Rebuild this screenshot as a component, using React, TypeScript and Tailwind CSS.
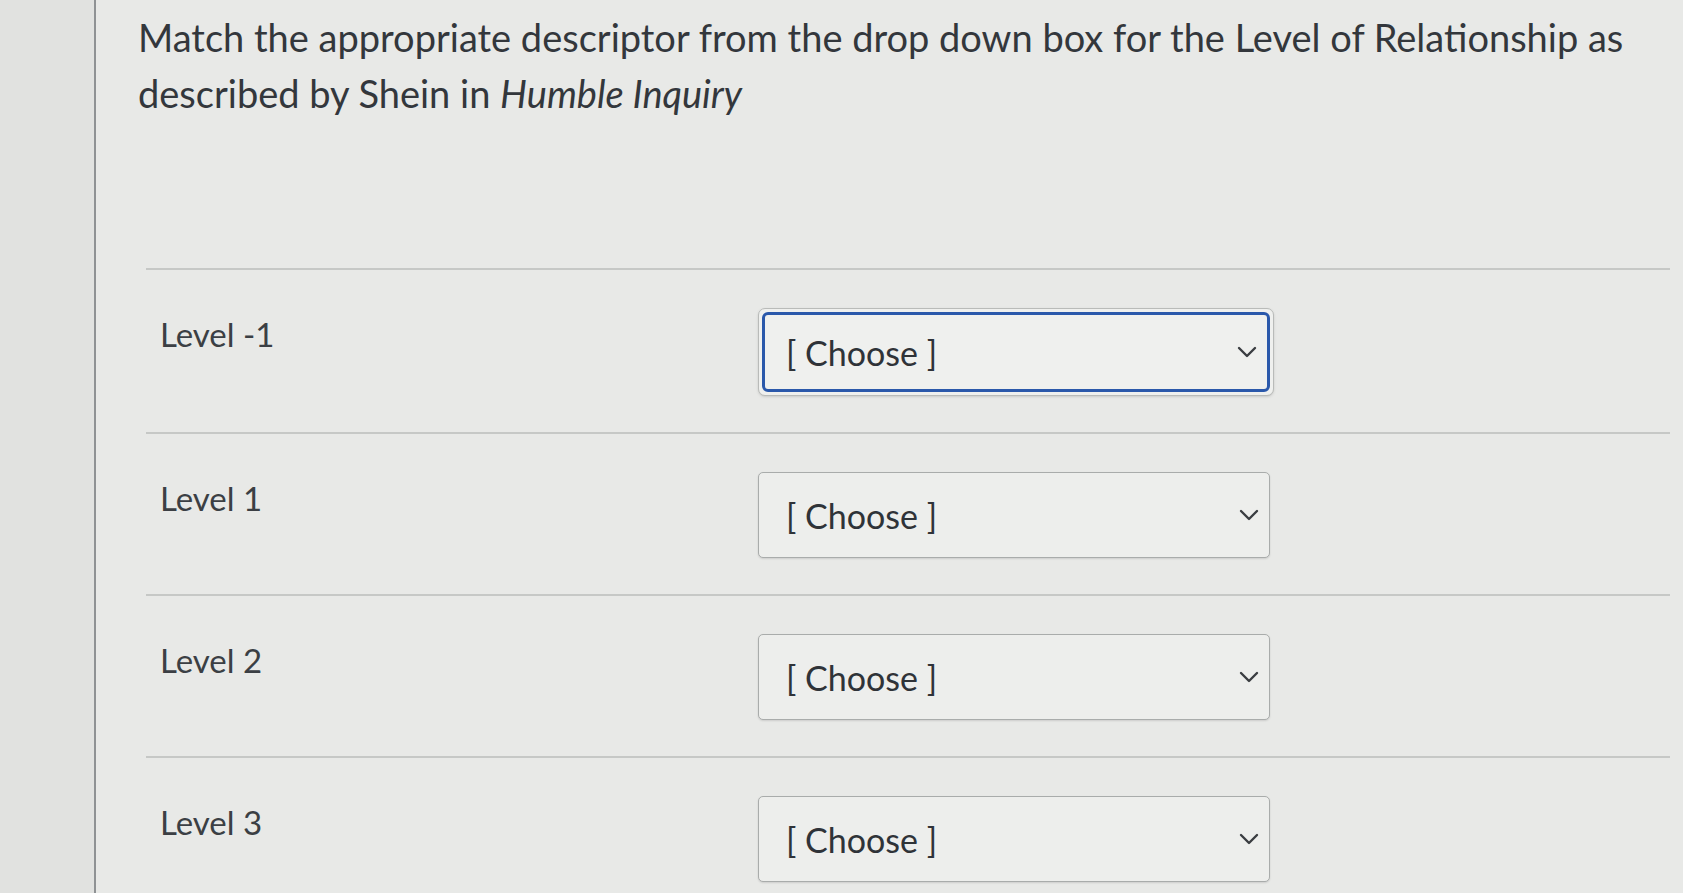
import { useState } from "react";

const levels = ["Level -1", "Level 1", "Level 2", "Level 3"];

function Chevron() {
  return (
    <svg
      width="20"
      height="12"
      viewBox="0 0 20 12"
      fill="none"
      className="pointer-events-none absolute right-[10px] top-1/2 -translate-y-1/2"
    >
      <path
        d="M2 2 L10 10 L18 2"
        stroke="#3a3d41"
        strokeWidth="2.4"
        strokeLinecap="round"
        strokeLinejoin="round"
      />
    </svg>
  );
}

function ChooseSelect({ focused }: { focused: boolean }) {
  const [value, setValue] = useState("");

  const select = (
    <select
      value={value}
      onChange={(e) => setValue(e.target.value)}
      className={`h-full w-full appearance-none bg-transparent pr-10 text-[34px] text-[#2f3338] outline-none ${
        focused ? "pl-[21px]" : "pl-[27px]"
      }`}
    >
      <option value="">[ Choose ]</option>
      <option value="a">Transactional</option>
      <option value="b">Personal</option>
      <option value="c">Intimate</option>
      <option value="d">Exploitative</option>
    </select>
  );

  if (focused) {
    return (
      <div className="h-[88px] w-[516px] rounded-[7px] border border-[#b9bbb9] bg-[#eff0ee] p-[3px] shadow-sm">
        <div className="relative h-full rounded-[6px] border-[3px] border-[#2a58aa]">
          {select}
          <Chevron />
        </div>
      </div>
    );
  }

  return (
    <div className="relative h-[86px] w-[512px] rounded-[5px] border border-[#a9acab] bg-[#edeeec] shadow-[0_1px_2px_rgba(0,0,0,0.12)]">
      {select}
      <Chevron />
    </div>
  );
}

export default function App() {
  return (
    <div
      className="flex h-[893px] w-full overflow-hidden bg-[#e8e9e7]"
      style={{ fontFamily: "Lato, 'Open Sans', sans-serif" }}
    >
      <div className="w-[96px] shrink-0 border-r-2 border-[#8f9294] bg-[#e1e2e0]" />

      <div className="flex-1">
        <h1 className="w-[1570px] pl-[42px] pt-[9px] text-[38px] font-normal leading-[56px] text-[#33373c]">
          Match the appropriate descriptor from the drop down box for the Level of Relationship as described by Shein in{" "}
          <em>Humble Inquiry</em>
        </h1>

        <div className="ml-[50px] mt-[147px] w-[1524px]">
          {levels.map((level, index) => (
            <div
              key={level}
              className="flex items-start border-t-2 border-[#c6c8c6] pb-[36px] pt-[38px]"
            >
              <div className="w-[612px] shrink-0 pl-[14px] pt-[2px] text-[33px] leading-[48px] text-[#3b3f44]">
                {level}
              </div>
              <ChooseSelect focused={index === 0} />
            </div>
          ))}
        </div>
      </div>
    </div>
  );
}
